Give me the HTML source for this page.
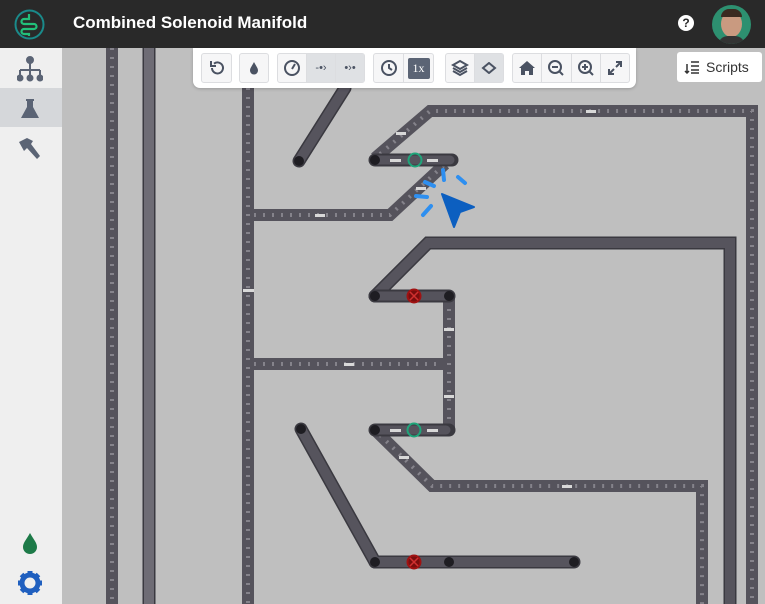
<!DOCTYPE html>
<html><head><style>
*{margin:0;padding:0;box-sizing:border-box}
body{width:765px;height:604px;overflow:hidden;font-family:"Liberation Sans",sans-serif;background:#bfbfbf;position:relative}
.hdr{position:absolute;left:0;top:0;width:765px;height:48px;background:#292929}
.title{position:absolute;left:73px;top:13px;color:#fff;font-size:17px;font-weight:bold}
.side{position:absolute;left:0;top:48px;width:62px;height:556px;background:#efefef}
.tb{position:absolute;left:193px;top:48px;width:443px;height:40px;background:#fff;border-radius:0 0 7px 7px;box-shadow:0 1px 3px rgba(0,0,0,.2)}
.g{position:absolute;top:5px;height:30px;border:1px solid #dcdde0;border-radius:3px;background:#f6f6f7;display:flex}
.g div{flex:1;border-right:1px solid #dcdde0;display:flex;align-items:center;justify-content:center}
.g div:last-child{border-right:none}
.on{background:#dfe1e4}
.scr{position:absolute;left:677px;top:52px;width:85px;height:30px;background:#fff;border-radius:3px;font-size:14px;color:#333;display:flex;align-items:center;padding-left:7px;gap:6px}
</style></head><body>
<svg style="position:absolute;left:0;top:0" width="765" height="604">
<g fill="none" stroke-linecap="round" stroke-linejoin="miter">
<g stroke="#3a3940" stroke-width="13">
<line x1="149" y1="48" x2="149" y2="604"/>
<line x1="345" y1="88" x2="299" y2="161"/>
<polyline points="375,296 428,243 730,243 730,604"/>
<line x1="301" y1="429" x2="375" y2="562"/>
<line x1="375" y1="562" x2="574" y2="562"/>
</g>
<g stroke="#56545d" stroke-width="10">
<line x1="149" y1="48" x2="149" y2="604" stroke="#6e6c75"/>
<line x1="345" y1="88" x2="299" y2="161"/>
<polyline points="375,296 428,243 730,243 730,604"/>
<line x1="301" y1="429" x2="375" y2="562"/>
<line x1="375" y1="562" x2="574" y2="562"/>
</g>
<g stroke="#55535c" stroke-width="12" stroke-linecap="butt">
<line x1="112" y1="48" x2="112" y2="604"/>
<line x1="248" y1="88" x2="248" y2="604"/>
<polyline points="248,215 390,215 445,164"/>
<polyline points="375,158 430,111 752,111 752,604"/>
<line x1="248" y1="364" x2="449" y2="364"/>
<line x1="449" y1="296" x2="449" y2="430"/>
<polyline points="375,430 432,486 702,486 702,604"/>
</g>
<g stroke="#85838b" stroke-width="4" stroke-dasharray="2 7" stroke-linecap="butt">
<line x1="112" y1="48" x2="112" y2="604"/>
<line x1="248" y1="88" x2="248" y2="604"/>
<polyline points="254,215 390,215 445,164"/>
<polyline points="380,154 430,111 752,111 752,604"/>
<line x1="254" y1="364" x2="443" y2="364"/>
<line x1="449" y1="300" x2="449" y2="426"/>
<polyline points="380,435 432,486 702,486 702,604"/>
</g>
<g stroke="#3a3940" stroke-width="13">
<line x1="375" y1="160" x2="452" y2="160"/>
<line x1="375" y1="296" x2="449" y2="296"/>
<line x1="375" y1="430" x2="449" y2="430"/>
</g>
<g stroke="#55535c" stroke-width="9">
<line x1="378" y1="160" x2="450" y2="160"/>
<line x1="378" y1="296" x2="446" y2="296"/>
<line x1="378" y1="430" x2="446" y2="430"/>
</g>
</g>
<g fill="#1e1d22">
<circle cx="299" cy="161" r="5"/><circle cx="375" cy="160" r="5"/><circle cx="375" cy="296" r="5"/><circle cx="449" cy="296" r="5"/>
<circle cx="375" cy="430" r="5"/><circle cx="301" cy="429" r="5"/><circle cx="375" cy="562" r="5"/><circle cx="449" cy="562" r="5"/><circle cx="574" cy="562" r="5"/>
</g>
<g fill="#d8d8d8">
<rect x="396" y="132" width="10" height="3"/><rect x="586" y="110" width="10" height="3"/><rect x="315" y="214" width="10" height="3"/>
<rect x="416" y="187" width="10" height="3"/><rect x="243" y="289" width="11" height="3"/><rect x="344" y="363" width="10" height="3"/>
<rect x="444" y="328" width="10" height="3"/><rect x="444" y="395" width="10" height="3"/><rect x="399" y="456" width="10" height="3"/>
<rect x="562" y="485" width="10" height="3"/><rect x="390" y="159" width="11" height="3"/><rect x="427" y="159" width="11" height="3"/>
<rect x="390" y="429" width="11" height="3"/><rect x="427" y="429" width="11" height="3"/>
</g>
<g fill="none" stroke="#1fa57a" stroke-width="2"><circle cx="415" cy="160" r="6.5"/><circle cx="414" cy="430" r="6.5"/></g>
<g stroke="#a01212" stroke-width="2" fill="#7a0e0e"><circle cx="414" cy="296" r="6.5"/><circle cx="414" cy="562" r="6.5"/></g>
<g stroke="#d03030" stroke-width="1.5"><path d="M410 292l8 8M418 292l-8 8M410 558l8 8M418 558l-8 8"/></g>
<g stroke="#2e8ff0" stroke-width="4" stroke-linecap="round">
<line x1="443" y1="170" x2="444" y2="180"/><line x1="458" y1="177" x2="465" y2="183"/>
<line x1="425" y1="182" x2="434" y2="186"/><line x1="416" y1="196" x2="427" y2="197"/><line x1="423" y1="215" x2="431" y2="206"/>
</g>
<path d="M442 194 L474 207 L460 212 L454 227 Z" fill="#0c5fc0" stroke="#0c5fc0" stroke-width="2" stroke-linejoin="round"/>
</svg>
<div class="hdr">
<svg style="position:absolute;left:14px;top:9px" width="31" height="31"><circle cx="15.5" cy="15.5" r="14" fill="none" stroke="#1a8a8a" stroke-width="2"/><path d="M15 5v5h-5a2.5 2.5 0 0 0 0 5h10a2.5 2.5 0 0 1 0 5h-10a2.5 2.5 0 0 0 0 5h5v2" fill="none" stroke="#22c07a" stroke-width="2.2"/></svg>
<div class="title">Combined Solenoid Manifold</div>
<div style="position:absolute;left:678px;top:15px;width:16px;height:16px;border-radius:50%;background:#fff;color:#292929;font-size:12px;font-weight:bold;text-align:center;line-height:16px">?</div>
<div style="position:absolute;left:712px;top:5px;width:39px;height:39px;border-radius:50%;background:#2d9070;overflow:hidden"><div style="position:absolute;left:9px;top:6px;width:21px;height:26px;border-radius:50%;background:#c99a80"></div><div style="position:absolute;left:9px;top:4px;width:21px;height:8px;border-radius:8px 8px 0 0;background:#3a2a20"></div><div style="position:absolute;left:6px;top:31px;width:27px;height:12px;border-radius:10px 10px 0 0;background:#333"></div></div>
</div>
<div class="side">
<div style="position:absolute;left:0;top:40px;width:62px;height:39px;background:#d5d7da"></div>
<svg style="position:absolute;left:17px;top:8px" width="26" height="26" fill="#5b6475" stroke="#5b6475" stroke-width="2"><circle cx="13" cy="4" r="3"/><path d="M13 4v18M3 14h20M3 14v8M23 14v8" fill="none"/><circle cx="3" cy="22" r="2.5"/><circle cx="13" cy="22" r="2.5"/><circle cx="23" cy="22" r="2.5"/></svg>
<svg style="position:absolute;left:20px;top:50px" width="20" height="22"><path d="M6 1h8v2h-1v6l6 11H1l6-11V3H6z" fill="#5b6475"/></svg>
<svg style="position:absolute;left:17px;top:88px" width="26" height="26"><path d="M2 6l8-4 6 3-2 3 9 12-3 3-10-11-3 3z" fill="#5b6475"/></svg>
<svg style="position:absolute;left:21px;top:484px" width="18" height="22"><path d="M9 1C5 8 2 11 2 15a7 7 0 0 0 14 0c0-4-3-7-7-14z" fill="#1d7a48"/></svg>
<svg style="position:absolute;left:17px;top:522px" width="26" height="26"><circle cx="13" cy="13" r="8" fill="none" stroke="#1f5fbf" stroke-width="5"/><g stroke="#1f5fbf" stroke-width="5"><path d="M13 1v4M13 21v4M1 13h4M21 13h4M4.5 4.5l3 3M18.5 18.5l3 3M4.5 21.5l3-3M18.5 7.5l3-3"/></g></svg>
</div>
<div class="tb">
<div class="g" style="left:8px;width:31px"><div><svg width="18" height="18"><path d="M4 9a5.5 5.5 0 1 0 2-4.3" fill="none" stroke="#4a5262" stroke-width="2"/><path d="M3 2v5h5" fill="none" stroke="#4a5262" stroke-width="2"/></svg></div></div>
<div class="g" style="left:46px;width:30px"><div><svg width="12" height="16"><path d="M6 2C4 6 2 8 2 10.5a4 4 0 0 0 8 0C10 8 8 6 6 2z" fill="#4a5262"/></svg></div></div>
<div class="g" style="left:84px;width:88px"><div><svg width="18" height="18"><circle cx="9" cy="9" r="7" fill="none" stroke="#4a5262" stroke-width="2"/><path d="M9 10l3-5" stroke="#4a5262" stroke-width="2"/></svg></div><div class="on" style="color:#4a5262;font-size:11px">-•›</div><div class="on" style="color:#4a5262;font-size:11px">•›•</div></div>
<div class="g" style="left:180px;width:61px"><div><svg width="18" height="18"><circle cx="9" cy="9" r="7" fill="none" stroke="#4a5262" stroke-width="2"/><path d="M9 5v4l3 2" fill="none" stroke="#4a5262" stroke-width="2"/></svg></div><div><span style="background:#5b6475;color:#fff;font-size:12px;padding:3px 5px;border-radius:2px;font-family:'Liberation Serif',serif">1x</span></div></div>
<div class="g" style="left:252px;width:59px"><div><svg width="18" height="18"><path d="M9 2l7 4-7 4-7-4z M2 9l7 4 7-4 M2 12l7 4 7-4" fill="none" stroke="#4a5262" stroke-width="2"/></svg></div><div class="on"><svg width="16" height="12"><path d="M8 1l6 5-6 5-6-5z" fill="none" stroke="#4a5262" stroke-width="2"/></svg></div></div>
<div class="g" style="left:319px;width:118px"><div><svg width="18" height="16"><path d="M9 1l8 7h-2v7h-4v-4H7v4H3V8H1z" fill="#4a5262"/></svg></div><div><svg width="18" height="18"><circle cx="8" cy="8" r="6" fill="none" stroke="#4a5262" stroke-width="2"/><path d="M5 8h6M12 12l4 4" stroke="#4a5262" stroke-width="2"/></svg></div><div><svg width="18" height="18"><circle cx="8" cy="8" r="6" fill="none" stroke="#4a5262" stroke-width="2"/><path d="M5 8h6M8 5v6M12 12l4 4" stroke="#4a5262" stroke-width="2"/></svg></div><div><svg width="16" height="16"><path d="M2 14l5-5M14 2l-5 5M2 9v5h5M14 7V2H9" fill="none" stroke="#4a5262" stroke-width="2"/></svg></div></div>
</div>
<div class="scr"><svg width="16" height="14"><path d="M3 4v9M1 11l2 2 2-2M7 2h8M7 6h8M7 10h8M7 13h8" stroke="#333" stroke-width="1.5" fill="none"/></svg>Scripts</div>
</body></html>
